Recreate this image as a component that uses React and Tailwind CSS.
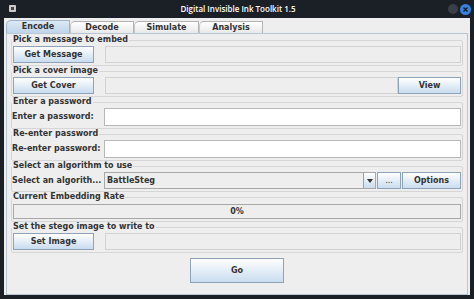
import React from 'react'

const font = { fontFamily: '"DejaVu Sans", sans-serif' }

function Btn({ children, className = '' }) {
  return (
    <div className={`flex items-center justify-center border border-[#8fa3b8] bg-gradient-to-b from-[#ffffff] to-[#c9dcee] text-[8px] font-bold text-[#333] ${className}`}>
      {children}
    </div>
  )
}

function Field({ white, className = '' }) {
  return (
    <div className={`border ${white ? 'bg-white border-[#b8b8b8]' : 'bg-[#eeeeee] border-[#d2d2d2]'} ${className}`} />
  )
}

function Section({ title, children }) {
  return (
    <fieldset className="border border-[#d6d6d6] rounded-[2px] px-[1px] pb-[2px] mx-[4px] min-w-0">
      <legend className="text-[8px] leading-[10px] font-bold text-[#333] px-[1px] ml-[-1px]">{title}</legend>
      <div className="flex items-stretch gap-[11px] mt-[1px]">{children}</div>
    </fieldset>
  )
}

function Tab({ children, active, className = '' }) {
  return (
    <div className={`h-[12px] flex items-center justify-center border border-b-0 rounded-tl-[5px] ${active ? 'h-[13px] bg-gradient-to-b from-[#dce8f4] to-[#c0d5ea] border-[#9fb3c8]' : 'bg-gradient-to-b from-[#ffffff] to-[#e8e8e8] border-[#b4b4b4] border-l-[#c8c8c8]'} ${className}`}>
      {children}
    </div>
  )
}

export default function App() {
  return (
    <div className="w-[474px] h-[299px] bg-[#1b1f26] flex flex-col overflow-hidden" style={font}>
      <div className="h-[18px] flex items-center relative shrink-0">
        <div className="absolute left-[8px] top-[4px] w-[9px] h-[9px]">
          <svg width="9" height="9" viewBox="0 0 9 9"><rect x="1" y="1" width="7" height="7" rx="1" fill="#ccc" /><rect x="3" y="3" width="3" height="3" fill="#444" /></svg>
        </div>
        <div className="flex-1 text-center text-white text-[8px] font-semibold pl-[2px]" style={{ fontFamily: '"Open Sans", sans-serif' }}>Digital Invisible Ink Toolkit 1.5</div>
        <div className="absolute right-[16px] top-[4px] w-[10px] h-[10px] rounded-full bg-[#3a3f48]" />
        <div className="absolute right-[3px] top-[4px] w-[11px] h-[11px] rounded-full bg-[#3584e4] flex items-center justify-center">
          <svg width="7" height="7" viewBox="0 0 7 7"><path d="M1.5 1.5 L5.5 5.5 M5.5 1.5 L1.5 5.5" stroke="#1b1f26" strokeWidth="1.5" /></svg>
        </div>
      </div>
      <div className="flex-1 mx-[4px] mb-[4px] bg-[#eeeeee] flex flex-col pt-[2px]">
        <div className="flex items-end h-[13px] pl-[2px] text-[8px] font-bold text-[#333]">
          <Tab active className="w-[64px]">Encode</Tab>
          <Tab className="w-[64px]">Decode</Tab>
          <Tab className="w-[65px]">Simulate</Tab>
          <Tab className="w-[64px]">Analysis</Tab>
        </div>
        <div className="flex-1 mx-[2px] border border-[#b8c6d4] bg-[#eeeeee] flex flex-col pt-[1px]">
          <Section title="Pick a message to embed">
            <Btn className="w-[81px] h-[17px]">Get Message</Btn>
            <Field className="flex-1 h-[17px]" />
          </Section>
          <Section title="Pick a cover image">
            <Btn className="w-[81px] h-[17px]">Get Cover</Btn>
            <div className="flex-1 flex">
              <Field className="flex-1 h-[17px]" />
              <Btn className="w-[63px] h-[17px]">View</Btn>
            </div>
          </Section>
          <Section title="Enter a password">
            <div className="w-[81px] h-[18px] flex items-center text-[8px] font-bold text-[#333] whitespace-nowrap -ml-[1px]">Enter a password:</div>
            <Field white className="flex-1 h-[18px]" />
          </Section>
          <Section title="Re-enter password">
            <div className="w-[81px] h-[18px] flex items-center text-[8px] font-bold text-[#333] whitespace-nowrap -ml-[1px]">Re-enter password:</div>
            <Field white className="flex-1 h-[18px]" />
          </Section>
          <Section title="Select an algorithm to use">
            <div className="w-[81px] h-[17px] flex items-center text-[8px] font-bold text-[#333] whitespace-nowrap -ml-[1px]">Select an algorith...</div>
            <div className="flex-1 flex gap-[1px]">
              <div className="flex-1 h-[17px] flex border border-[#a8a8a8] bg-[#eeeeee]">
                <div className="flex-1 flex items-center pl-[2px] text-[8px] font-bold text-[#333]">BattleSteg</div>
                <div className="w-[12px] flex items-center justify-center bg-gradient-to-b from-[#ffffff] to-[#c9dcee] border-l border-[#8fa3b8]">
                  <svg width="6" height="4" viewBox="0 0 6 4"><path d="M0 0 L6 0 L3 4 Z" fill="#333" /></svg>
                </div>
              </div>
              <Btn className="w-[24px] h-[17px] font-normal">...</Btn>
              <Btn className="w-[59px] h-[17px]">Options</Btn>
            </div>
          </Section>
          <Section title="Current Embedding Rate">
            <div className="flex-1 h-[15px] mt-[1px] flex items-center justify-center border border-[#a8a8a8] bg-[#eeeeee] text-[8px] font-bold text-[#333]">0%</div>
          </Section>
          <Section title="Set the stego image to write to">
            <Btn className="w-[81px] h-[17px]">Set Image</Btn>
            <Field className="flex-1 h-[17px]" />
          </Section>
          <div className="flex justify-center mt-[5px]">
            <Btn className="w-[94px] h-[25px]">Go</Btn>
          </div>
        </div>
      </div>
    </div>
  )
}
